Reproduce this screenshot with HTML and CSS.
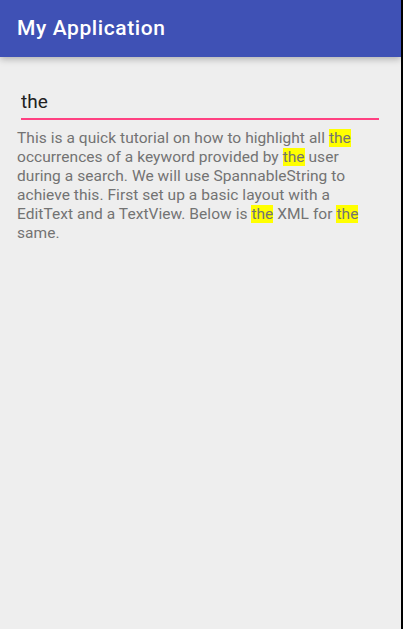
FILE: index.html
```html
<!DOCTYPE html>
<html lang="en">
<head>
    <meta charset="UTF-8">
    <meta name="viewport" content="width=device-width, initial-scale=1.0">
    <title>My Application</title>
    <link rel="stylesheet" href="styles.css">
</head>
<body>

    <div class="screen">
        <header class="app-bar">
            <h1>My Application</h1>
        </header>

        <main class="content">
            <div class="search-field">
                <input type="text" id="keyword" value="the" oninput="destacar()">
            </div>

            <p class="texto" id="texto">This is a quick tutorial on how to highlight all the occurrences of a keyword provided by the user during a search. We will use SpannableString to achieve this. First set up a basic layout with a EditText and a TextView. Below is the XML for the same.</p>
        </main>
    </div>

    <script>
        const original = document.getElementById('texto').textContent;

        function destacar() {
            let palavra = document.getElementById('keyword').value.trim();
            let saida = document.getElementById('texto');

            if (palavra === '') {
                saida.textContent = original;
                return;
            }

            let escapada = palavra.replace(/[.*+?^${}()|[\]\\]/g, '\\$&');
            let regex = new RegExp('\\b(' + escapada + ')\\b', 'gi');
            saida.innerHTML = original.replace(regex, '<span class="marca">$1</span>');
        }

        destacar();
    </script>

</body>
</html>
```

FILE: styles.css
```css
html {
    background-color: #000000;
}

body {
    margin: 0;
    font-family: Roboto, "Noto Sans", Arial, sans-serif;
    background-color: #000000;
}

.screen {
    width: 401px;
    min-height: 629px;
    background-color: #eeeeee;
}

.app-bar {
    height: 57px;
    background-color: #3f51b5;
    box-shadow: 0 2px 7px rgba(0, 0, 0, 0.28);
    position: relative;
    display: flex;
    align-items: center;
    padding: 0 17px;
}

.app-bar h1 {
    margin: 0;
    color: #ffffff;
    font-size: 21px;
    font-weight: 500;
    letter-spacing: 0.6px;
    padding-bottom: 1px;
}

.content {
    padding: 32px 18px 0 17px;
}

.search-field {
    padding: 0 4px;
}

.search-field input {
    width: 100%;
    box-sizing: border-box;
    border: none;
    border-bottom: 2px solid #ff4081;
    background: transparent;
    font-family: inherit;
    font-size: 19px;
    color: #212121;
    padding: 0 0 5px 0;
    margin: 0;
    outline: none;
    height: 31px;
}

.texto {
    margin: 9px 0 0 0;
    font-size: 15.5px;
    line-height: 19px;
    letter-spacing: 0.05px;
    color: #737373;
}

.marca {
    background-color: #ffff00;
}
```
